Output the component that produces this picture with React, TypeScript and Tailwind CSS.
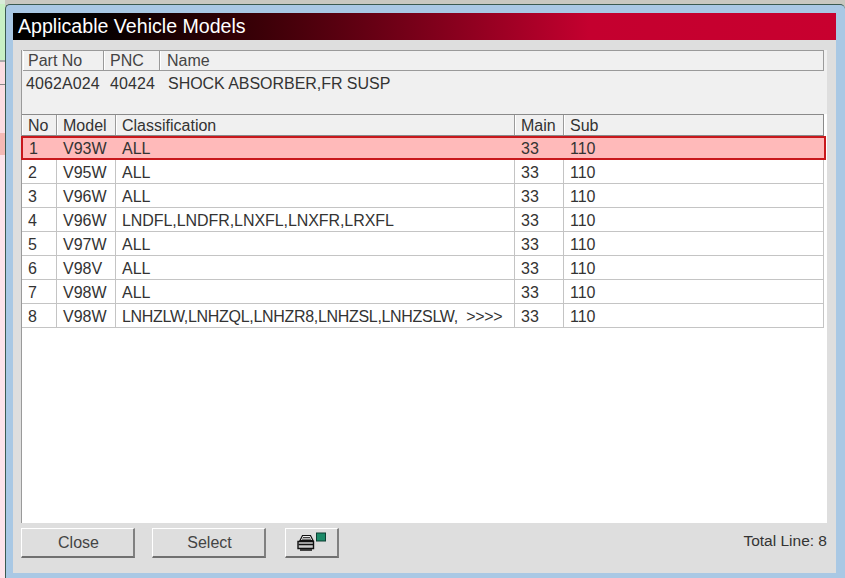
import React from "react";

const rows = [
  ["1", "V93W", "ALL"],
  ["2", "V95W", "ALL"],
  ["3", "V96W", "ALL"],
  ["4", "V96W", "LNDFL,LNDFR,LNXFL,LNXFR,LRXFL"],
  ["5", "V97W", "ALL"],
  ["6", "V98V", "ALL"],
  ["7", "V98W", "ALL"],
  ["8", "V98W", "LNHZLW,LNHZQL,LNHZR8,LNHZSL,LNHZSLW,  >>>>"],
];

function Head({ className, children }: { className: string; children: React.ReactNode }) {
  return (
    <div className={`${className} h-full flex items-center bg-[#f0f0f0] border-r border-[#9a9a9a] border-l-white border-l`}>
      {children}
    </div>
  );
}

function Btn({ className, children }: { className: string; children: React.ReactNode }) {
  return (
    <button className={`${className} h-[30px] flex items-center justify-center bg-[#dedede] text-[#444] border-t border-l border-t-white border-l-white border-r-2 border-b-2 border-r-[#808080] border-b-[#707070]`}>
      {children}
    </button>
  );
}

export default function App() {
  return (
    <div className="w-[845px] h-[578px] overflow-hidden flex bg-[#d8ecd8] font-['Liberation_Sans',Arial,sans-serif] text-[16px] text-[#222]">
      {/* what shows of the page behind */}
      <div className="w-[5px] flex flex-col pt-[4px] shrink-0">
        <div className="h-[56px] bg-[#c8f0c4]" />
        <div className="h-[2px] bg-[#aaa]" />
        <div className="h-[22px] bg-[#fbdde2]" />
        <div className="h-[1px] bg-[#888]" />
        <div className="h-[48px] bg-[#fbdde2]" />
        <div className="h-[22px] bg-[#f4b9b4]" />
        <div className="flex-1 bg-[#fde3ea]" />
      </div>

      <div className="flex-1 flex flex-col pt-[4px] bg-[#c8c8c0]">
        {/* window frame */}
        <div className="flex-1 flex flex-col border-t border-l border-[#3a5a50] rounded-tl-[5px] rounded-tr-[5px] bg-[#a9c8e4] pl-[7px] pr-[9px] pt-[8px] pb-[5px]">
          <div className="h-[27px] shrink-0 flex items-center pl-[5px] text-[19.6px] text-white bg-gradient-to-r from-black via-[#c4002f] via-[70%] to-[#c8002f]">
            Applicable Vehicle Models
          </div>

          <div className="flex-1 flex flex-col bg-[#dedede] pt-[10px]">
            <div className="ml-[8px] w-[806px] flex-1 flex flex-col">
              {/* part info */}
              <div className="h-[64px] shrink-0 bg-[#f0f0f0] pl-[1px] pr-[3px] border-l border-[#9a9a9a]">
                <div className="h-[21px] flex border-y border-[#9a9a9a] border-r text-[#444]">
                  <Head className="w-[81px] pl-[4px] pt-[1px]">Part No</Head>
                  <Head className="w-[56px] pl-[5px] pt-[1px]">PNC</Head>
                  <div className="flex-1 flex items-center pl-[6px] pt-[1px] border-l border-white">Name</div>
                </div>
                <div className="h-[25px] flex items-center -ml-[1px] text-[#333]">
                  <span className="w-[85px] pl-[4px] tracking-[0.1px]">4062A024</span>
                  <span className="w-[58px] pl-[3px] tracking-[0.1px]">40424</span>
                  <span className="pl-[3px] tracking-[-0.04px]">SHOCK ABSORBER,FR SUSP</span>
                </div>
              </div>

              {/* table */}
              <div className="flex-1 flex flex-col bg-white border-l border-[#9a9a9a]">
                <div className="h-[22px] shrink-0 flex border-t border-b border-[#8a8a8a] mr-[3px] border-r text-[#333]">
                  <Head className="w-[35px] pl-[5px] pt-[1px]">No</Head>
                  <Head className="w-[59px] pl-[5px] pt-[1px]">Model</Head>
                  <Head className="w-[399px] pl-[5px] pt-[1px]">Classification</Head>
                  <Head className="w-[49px] pl-[5px] pt-[1px]">Main</Head>
                  <div className="flex-1 flex items-center pl-[5px] pt-[1px] bg-[#f0f0f0] border-l border-white">Sub</div>
                </div>
                {rows.map((r, i) => (
                  <div
                    key={r[0]}
                    className={
                      i === 0
                        ? "h-[24px] shrink-0 flex items-center bg-[#ffbaba] border-2 border-[#c8181c] -ml-px mr-[1px] text-[#333] pt-[1px]"
                        : "h-[24px] shrink-0 flex items-center border-b border-[#c4c4c4] mr-[3px] text-[#333]"
                    }
                  >
                    <div className={`h-full flex items-center pl-[6px] ${i === 0 ? "w-[34px]" : "w-[35px] pt-[3px] border-r border-[#c4c4c4]"}`}>{r[0]}</div>
                    <div className={`h-full w-[59px] flex items-center pl-[6px] ${i === 0 ? "" : "pt-[3px] border-r border-[#c4c4c4]"}`}>{r[1]}</div>
                    <div className={`h-full w-[399px] flex items-center pl-[6px] whitespace-pre ${i === 0 ? "" : "pt-[3px] border-r border-[#c4c4c4]"} ${i === 7 ? "tracking-[-0.31px]" : i === 3 ? "tracking-[-0.07px]" : ""}`}>{r[2]}</div>
                    <div className={`h-full w-[49px] flex items-center pl-[6px] ${i === 0 ? "" : "pt-[3px] border-r border-[#c4c4c4]"}`}>33</div>
                    <div className={`h-full flex-1 flex items-center pl-[6px] ${i === 0 ? "" : "pt-[3px] border-r border-[#c4c4c4]"}`}>110</div>
                  </div>
                ))}
              </div>
            </div>

            {/* footer */}
            <div className="h-[50px] shrink-0 flex pl-[8px] pr-[9px] pt-[5px]">
              <Btn className="w-[114px] pl-[2px]">Close</Btn>
              <Btn className="w-[114px] ml-[17px] pl-[2px]">Select</Btn>
              <Btn className="w-[54px] ml-[19px]">
                <svg width="30" height="22" viewBox="0 0 30 22" className="-ml-[2px]">
                  <path d="M6.5 3.5h8l2.5 5H4z" fill="#eee" stroke="#111" strokeWidth="1.2" />
                  <path d="M7 5.5h7M6 7.2h9" stroke="#111" strokeWidth="0.8" />
                  <path d="M2 9.5h15.5v7H2z" fill="#ccc" stroke="#111" strokeWidth="1.4" />
                  <path d="M2.5 12.5h15M4 18h12" stroke="#111" strokeWidth="1.6" />
                  <rect x="20.5" y="1" width="9" height="8" fill="#1c8a68" stroke="#0d3f33" />
                </svg>
              </Btn>
              <div className="flex-1 flex justify-end pt-[1px] text-[15.5px] text-[#333]">Total Line: 8</div>
            </div>
          </div>
        </div>
      </div>
    </div>
  );
}
